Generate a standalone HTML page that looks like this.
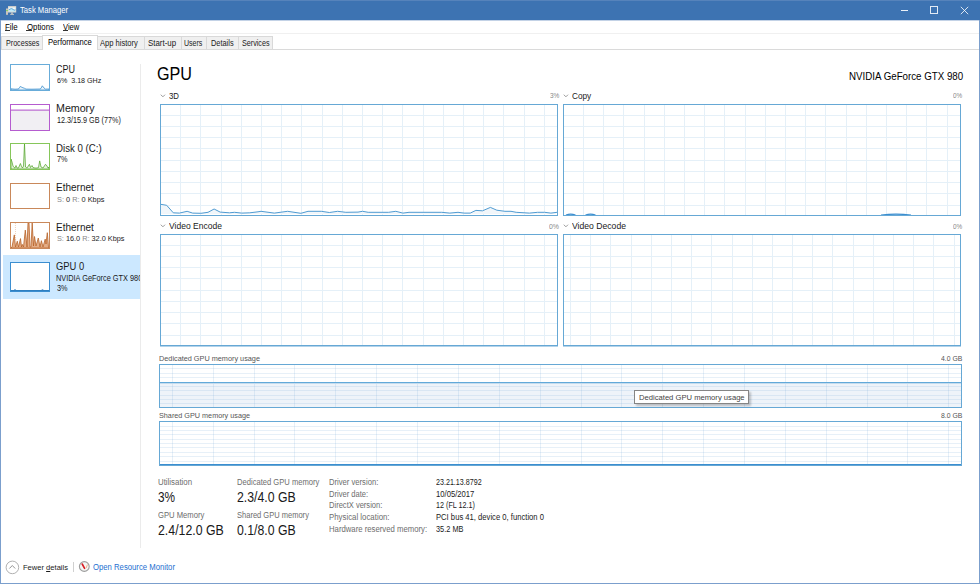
<!DOCTYPE html>
<html><head><meta charset="utf-8">
<style>
*{margin:0;padding:0;box-sizing:border-box}
html,body{width:980px;height:584px;overflow:hidden;background:#fff}
body{position:relative;font-family:"Liberation Sans",sans-serif;color:#000}
.a{position:absolute;white-space:nowrap;line-height:1;transform-origin:0 0}
svg.a{overflow:visible}
u{text-decoration:underline;text-underline-offset:1px}
</style></head><body>
<div class="a" style="left:0px;top:0px;width:980px;height:20px;background:#3d73b2;"></div>
<div class="a" style="left:0px;top:0px;width:980px;height:1px;background:#5683bb;"></div>
<div class="a" style="left:0px;top:20px;width:980px;height:1px;background:#c3d2e6;"></div>
<div class="a" style="left:0px;top:20px;width:1px;height:564px;background:#7b9fcd;"></div>
<div class="a" style="left:979px;top:20px;width:1px;height:564px;background:#7b9fcd;"></div>
<div class="a" style="left:0px;top:583px;width:980px;height:1px;background:#7b9fcd;"></div>
<svg class="a" style="left:5px;top:5px" width="13" height="12" viewBox="0 0 13 12">
<rect x="1" y="3.5" width="2" height="6.3" fill="#cbc5bb"/>
<rect x="1" y="5" width="2" height="1.1" fill="#8c6"/>
<rect x="3" y="1.1" width="8.2" height="6.4" fill="#dcd8d0"/>
<rect x="3.8" y="2.6" width="6.5" height="4" fill="#bfe8fa"/>
<path d="M3.8 2.6 H10.3 V4.6 Q9.2 5.6 8.2 4.3 Q6.8 2.8 5.2 3.9 L3.8 4.6 Z" fill="#f4f6f8"/>
<path d="M3.8 4.8 L5.2 4 Q6.8 3 8.2 4.5 Q9.2 5.6 10.3 4.8" stroke="#4b9fd6" stroke-width="0.9" fill="none"/>
<rect x="6.2" y="7.5" width="1.6" height="1.4" fill="#d6d0c6"/>
<rect x="5.2" y="8.9" width="3.8" height="0.9" fill="#d6d0c6"/>
</svg>
<div class="a" style="left:20.00px;top:6px;font-size:9.200px;color:#fff;transform:scaleX(0.8307);">Task Manager</div>
<div class="a" style="left:901px;top:10px;width:7px;height:1px;background:rgba(255,255,255,0.9);"></div>
<div class="a" style="left:930px;top:6px;width:8px;height:8px;border:1px solid rgba(255,255,255,0.85)"></div>
<svg class="a" style="left:960px;top:6px" width="9" height="9" viewBox="0 0 9 9"><path d="M0.8 0.8 L8.2 8.2 M8.2 0.8 L0.8 8.2" stroke="rgba(255,255,255,0.9)" stroke-width="0.9"/></svg>
<div class="a" style="left:5.10px;top:23px;font-size:8.700px;color:#000;transform:scaleX(0.9131);">File</div>
<div class="a" style="left:5px;top:30px;width:5px;height:1px;background:#333;"></div>
<div class="a" style="left:26.50px;top:23px;font-size:8.700px;color:#000;transform:scaleX(0.9005);">Options</div>
<div class="a" style="left:26px;top:30px;width:6px;height:1px;background:#333;"></div>
<div class="a" style="left:63.30px;top:23px;font-size:8.700px;color:#000;transform:scaleX(0.8717);">View</div>
<div class="a" style="left:63px;top:30px;width:5px;height:1px;background:#333;"></div>
<div class="a" style="left:1px;top:33px;width:978px;height:1px;background:#f0f0f0;"></div>
<div class="a" style="left:1px;top:49px;width:978px;height:1px;background:#dadada;"></div>
<div class="a" style="left:1px;top:36px;width:43px;height:13px;background:#f0f0f0;border:1px solid #d9d9d9;border-bottom:none"></div>
<div class="a" style="left:5.90px;top:39px;font-size:8.700px;color:#1a1a1a;transform:scaleX(0.8223);">Processes</div>
<div class="a" style="left:97px;top:36px;width:47.5px;height:13px;background:#f0f0f0;border:1px solid #d9d9d9;border-bottom:none"></div>
<div class="a" style="left:99.80px;top:39px;font-size:8.700px;color:#1a1a1a;transform:scaleX(0.8700);">App history</div>
<div class="a" style="left:143.5px;top:36px;width:38.19999999999999px;height:13px;background:#f0f0f0;border:1px solid #d9d9d9;border-bottom:none"></div>
<div class="a" style="left:147.90px;top:39px;font-size:8.700px;color:#1a1a1a;transform:scaleX(0.9080);">Start-up</div>
<div class="a" style="left:180.7px;top:36px;width:26.700000000000017px;height:13px;background:#f0f0f0;border:1px solid #d9d9d9;border-bottom:none"></div>
<div class="a" style="left:184.30px;top:39px;font-size:8.700px;color:#1a1a1a;transform:scaleX(0.8099);">Users</div>
<div class="a" style="left:206.4px;top:36px;width:32.19999999999999px;height:13px;background:#f0f0f0;border:1px solid #d9d9d9;border-bottom:none"></div>
<div class="a" style="left:211.00px;top:39px;font-size:8.700px;color:#1a1a1a;transform:scaleX(0.8499);">Details</div>
<div class="a" style="left:237.6px;top:36px;width:35.00000000000003px;height:13px;background:#f0f0f0;border:1px solid #d9d9d9;border-bottom:none"></div>
<div class="a" style="left:241.70px;top:39px;font-size:8.700px;color:#1a1a1a;transform:scaleX(0.8273);">Services</div>
<div class="a" style="left:42px;top:35px;width:56px;height:15px;background:#fff;border:1px solid #d9d9d9;border-bottom:none"></div>
<div class="a" style="left:48.00px;top:38px;font-size:8.700px;color:#000;transform:scaleX(0.8794);">Performance</div>
<div class="a" style="left:140px;top:64px;width:1px;height:484px;background:#ebebeb;"></div>
<div class="a" style="left:3px;top:255px;width:137px;height:44px;background:#cce8ff;"></div>
<svg class="a" style="left:10px;top:64px" width="40" height="27" viewBox="0 0 40 27"><path d="M1 26 L1 24.8 L5 25.2 L8 25 L9 24.6 L10.3 22.4 L12 23.4 L14.5 24.3 L16 25.1 L22 25.2 L30 25 L31 24.4 L32.3 21.8 L34 24 L35.5 25.1 L39 25 L39 26 Z" fill="#eaf3fa" stroke="#3f92cf" stroke-width="0.8"/><rect x="0.5" y="0.5" width="39" height="26" fill="none" stroke="#68acd9" stroke-width="1"/></svg>
<div class="a" style="left:56.10px;top:64px;font-size:10.800px;color:#1a1a1a;transform:scaleX(0.8332);">CPU</div>
<div class="a" style="left:56.50px;top:77px;font-size:8.100px;color:#1a1a1a;transform:scaleX(0.8786);">6%&nbsp; 3.18 GHz</div>
<svg class="a" style="left:10px;top:104px" width="40" height="27" viewBox="0 0 40 27"><rect x="1" y="6" width="38" height="20" fill="#f1eff3"/><rect x="1" y="5.6" width="38" height="1" fill="#b04ecb"/><rect x="0.5" y="0.5" width="39" height="26" fill="none" stroke="#b55ccf" stroke-width="1"/></svg>
<div class="a" style="left:56.10px;top:103px;font-size:10.800px;color:#1a1a1a;transform:scaleX(0.9871);">Memory</div>
<div class="a" style="left:56.50px;top:116px;font-size:8.400px;color:#1a1a1a;transform:scaleX(0.8620);">12.3/15.9 GB (77%)</div>
<svg class="a" style="left:10px;top:143px" width="40" height="27" viewBox="0 0 40 27"><path d="M1 26 L1 16 L2 19 L3 23 L4 24.5 L5 25 L6 22.5 L7 25 L8.5 25 L10.4 20.5 L11.5 23.5 L12.5 25 L13.5 23 L14.5 0.8 L15.5 24 L17 25 L19.4 21.3 L20.5 24.5 L22 22.5 L23 24.5 L25 25 L27 25 L28.5 24.5 L29.7 17.9 L31 24 L33 25 L35.5 21.3 L37 23 L38 25 L39 24 L39 26 Z" fill="#e6f2de" stroke="#4aa020" stroke-width="0.7"/><rect x="0.5" y="0.5" width="39" height="26" fill="none" stroke="#86c65a" stroke-width="1"/></svg>
<div class="a" style="left:56.10px;top:143px;font-size:10.800px;color:#1a1a1a;transform:scaleX(0.8961);">Disk 0 (C:)</div>
<div class="a" style="left:56.50px;top:155px;font-size:8.400px;color:#1a1a1a;transform:scaleX(0.8731);">7%</div>
<svg class="a" style="left:10px;top:183px" width="40" height="26" viewBox="0 0 40 26"><rect x="0.5" y="0.5" width="39" height="25" fill="none" stroke="#c9885a" stroke-width="1"/></svg>
<div class="a" style="left:56.10px;top:182px;font-size:10.800px;color:#1a1a1a;transform:scaleX(0.9259);">Ethernet</div>

<div class="a" style="left:56.50px;top:196px;font-size:8.100px;color:#1a1a1a;transform:scaleX(0.9095);"><span style="color:#888">S:</span> 0 <span style="color:#888">R:</span> 0 Kbps</div>
<svg class="a" style="left:10px;top:222px" width="40" height="27" viewBox="0 0 40 27"><path d="M5.4 1 L5.6 18" stroke="#efd2bd" stroke-width="1" stroke-dasharray="1 1" fill="none"/><path d="M1 26 L2 25 L4.3 12.9 L5.5 25 L7.3 19.2 L8.5 25 L10.5 16.6 L11.5 25 L12.3 22.4 L13.5 25 L15.3 8.1 L17 25 L18 1 L19 1 L20 25 L21 25 L22.2 1 L23.5 24 L24.5 14.5 L26 24 L28.3 16 L30 25 L31.4 18.7 L33 25 L35.2 17.1 L36 22 L37.3 10.7 L38.5 25 L39 26 Z" fill="#e4ad86" stroke="#b8632a" stroke-width="0.8"/><rect x="0.5" y="0.5" width="39" height="26" fill="none" stroke="#c9885a" stroke-width="1"/></svg>
<div class="a" style="left:56.10px;top:222px;font-size:10.800px;color:#1a1a1a;transform:scaleX(0.9259);">Ethernet</div>
<div class="a" style="left:56.50px;top:235px;font-size:8.100px;color:#1a1a1a;transform:scaleX(0.9030);"><span style="color:#888">S:</span> 16.0 <span style="color:#888">R:</span> 32.0 Kbps</div>
<svg class="a" style="left:10px;top:262px" width="40" height="30" viewBox="0 0 40 30"><rect x="0" y="0" width="40" height="30" fill="#fff"/><rect x="1" y="28" width="38" height="1.2" fill="#2f7fc0"/><path d="M4 28.5 L5 27 L6 28.5 M31.5 28.5 L32.5 27 L33.5 28.5" stroke="#2f7fc0" stroke-width="0.6" fill="none"/><rect x="0.5" y="0.5" width="39" height="29" fill="none" stroke="#3b8ed0" stroke-width="1"/></svg>
<div class="a" style="left:56.30px;top:261px;font-size:10.800px;color:#1a1a1a;transform:scaleX(0.8701);">GPU 0</div>
<div class="a" style="left:0;top:270px;width:140px;height:14px;overflow:hidden">
<div class="a" style="left:56.30px;top:4px;font-size:8.700px;color:#1a1a1a;transform:scaleX(0.8469);">NVIDIA GeForce GTX 980</div>
</div>
<div class="a" style="left:56.50px;top:284px;font-size:9.000px;color:#1a1a1a;transform:scaleX(0.8072);">3%</div>
<div class="a" style="left:156.70px;top:65px;font-size:18.600px;color:#000;transform:scaleX(0.8684);">GPU</div>
<div class="a" style="left:848.90px;top:71px;font-size:10.500px;color:#000;transform:scaleX(0.9275);">NVIDIA GeForce GTX 980</div>
<svg class="a" style="left:160px;top:93.5px" width="6" height="4" viewBox="0 0 6 4"><path d="M0.8 0.7 L2.9 2.8 L5 0.7" stroke="#9a9a9a" stroke-width="1" fill="none"/></svg>
<div class="a" style="left:168.80px;top:92px;font-size:9.000px;color:#1a1a1a;transform:scaleX(0.8692);">3D</div>
<div class="a" style="left:549.60px;top:92px;font-size:7.300px;color:#888;transform:scaleX(0.8909);">3%</div>
<svg class="a" style="left:160px;top:104px" width="398" height="112" viewBox="0 0 398 112" shape-rendering="crispEdges"><line x1="20.5" y1="0" x2="20.5" y2="112" stroke="#e5f0f8" stroke-width="1"/><line x1="40.5" y1="0" x2="40.5" y2="112" stroke="#e5f0f8" stroke-width="1"/><line x1="61.5" y1="0" x2="61.5" y2="112" stroke="#e5f0f8" stroke-width="1"/><line x1="81.5" y1="0" x2="81.5" y2="112" stroke="#e5f0f8" stroke-width="1"/><line x1="101.5" y1="0" x2="101.5" y2="112" stroke="#e5f0f8" stroke-width="1"/><line x1="121.5" y1="0" x2="121.5" y2="112" stroke="#e5f0f8" stroke-width="1"/><line x1="141.5" y1="0" x2="141.5" y2="112" stroke="#e5f0f8" stroke-width="1"/><line x1="162.5" y1="0" x2="162.5" y2="112" stroke="#e5f0f8" stroke-width="1"/><line x1="182.5" y1="0" x2="182.5" y2="112" stroke="#e5f0f8" stroke-width="1"/><line x1="202.5" y1="0" x2="202.5" y2="112" stroke="#e5f0f8" stroke-width="1"/><line x1="222.5" y1="0" x2="222.5" y2="112" stroke="#e5f0f8" stroke-width="1"/><line x1="242.5" y1="0" x2="242.5" y2="112" stroke="#e5f0f8" stroke-width="1"/><line x1="263.5" y1="0" x2="263.5" y2="112" stroke="#e5f0f8" stroke-width="1"/><line x1="283.5" y1="0" x2="283.5" y2="112" stroke="#e5f0f8" stroke-width="1"/><line x1="303.5" y1="0" x2="303.5" y2="112" stroke="#e5f0f8" stroke-width="1"/><line x1="323.5" y1="0" x2="323.5" y2="112" stroke="#e5f0f8" stroke-width="1"/><line x1="343.5" y1="0" x2="343.5" y2="112" stroke="#e5f0f8" stroke-width="1"/><line x1="364.5" y1="0" x2="364.5" y2="112" stroke="#e5f0f8" stroke-width="1"/><line x1="384.5" y1="0" x2="384.5" y2="112" stroke="#e5f0f8" stroke-width="1"/><line x1="0" y1="11.5" x2="398" y2="11.5" stroke="#e5f0f8" stroke-width="1"/><line x1="0" y1="22.5" x2="398" y2="22.5" stroke="#e5f0f8" stroke-width="1"/><line x1="0" y1="33.5" x2="398" y2="33.5" stroke="#e5f0f8" stroke-width="1"/><line x1="0" y1="44.5" x2="398" y2="44.5" stroke="#e5f0f8" stroke-width="1"/><line x1="0" y1="56.5" x2="398" y2="56.5" stroke="#e5f0f8" stroke-width="1"/><line x1="0" y1="67.5" x2="398" y2="67.5" stroke="#e5f0f8" stroke-width="1"/><line x1="0" y1="78.5" x2="398" y2="78.5" stroke="#e5f0f8" stroke-width="1"/><line x1="0" y1="89.5" x2="398" y2="89.5" stroke="#e5f0f8" stroke-width="1"/><line x1="0" y1="101.5" x2="398" y2="101.5" stroke="#e5f0f8" stroke-width="1"/><path d="M0.6 100.3 L6.7 101.3 L13.3 108.8 L19.4 109.1 L27.1 107.3 L32.7 109.1 L40.9 109.3 L48.0 108.3 L54.1 105.0 L60.2 108.1 L69.4 108.8 L74.5 108.3 L81.7 109.1 L89.8 108.8 L98.0 107.8 L101.0 107.3 L114.3 109.1 L127.6 107.3 L140.9 109.3 L148.0 107.3 L161.3 107.3 L169.4 108.5 L177.6 107.3 L185.8 108.3 L198.0 108.1 L202.6 107.3 L208.2 108.3 L228.6 108.3 L235.8 107.3 L242.9 109.1 L249.0 108.3 L281.7 108.3 L289.8 109.1 L298.0 108.3 L304.1 109.1 L310.2 109.1 L315.9 106.4 L322.5 106.8 L330.4 103.4 L336.8 106.2 L344.9 107.3 L351.0 107.3 L356.2 108.3 L369.4 109.1 L377.6 108.3 L384.7 108.3 L390.9 109.1 L397.0 108.3 L396 110 L1 110 Z" fill="#f1f6fa" stroke="none"/><path d="M0.6 100.3 L6.7 101.3 L13.3 108.8 L19.4 109.1 L27.1 107.3 L32.7 109.1 L40.9 109.3 L48.0 108.3 L54.1 105.0 L60.2 108.1 L69.4 108.8 L74.5 108.3 L81.7 109.1 L89.8 108.8 L98.0 107.8 L101.0 107.3 L114.3 109.1 L127.6 107.3 L140.9 109.3 L148.0 107.3 L161.3 107.3 L169.4 108.5 L177.6 107.3 L185.8 108.3 L198.0 108.1 L202.6 107.3 L208.2 108.3 L228.6 108.3 L235.8 107.3 L242.9 109.1 L249.0 108.3 L281.7 108.3 L289.8 109.1 L298.0 108.3 L304.1 109.1 L310.2 109.1 L315.9 106.4 L322.5 106.8 L330.4 103.4 L336.8 106.2 L344.9 107.3 L351.0 107.3 L356.2 108.3 L369.4 109.1 L377.6 108.3 L384.7 108.3 L390.9 109.1 L397.0 108.3" stroke="#4f9bd2" stroke-width="1" fill="none" shape-rendering="auto"/><rect x="0.5" y="0.5" width="397" height="111" fill="none" stroke="#66a8d5" stroke-width="1"/></svg>
<svg class="a" style="left:563px;top:93.5px" width="6" height="4" viewBox="0 0 6 4"><path d="M0.8 0.7 L2.9 2.8 L5 0.7" stroke="#9a9a9a" stroke-width="1" fill="none"/></svg>
<div class="a" style="left:572.00px;top:92px;font-size:9.000px;color:#1a1a1a;transform:scaleX(0.9138);">Copy</div>
<div class="a" style="left:952.90px;top:92px;font-size:7.300px;color:#888;transform:scaleX(0.8720);">0%</div>
<svg class="a" style="left:563px;top:104px" width="398" height="112" viewBox="0 0 398 112" shape-rendering="crispEdges"><line x1="20.5" y1="0" x2="20.5" y2="112" stroke="#e5f0f8" stroke-width="1"/><line x1="40.5" y1="0" x2="40.5" y2="112" stroke="#e5f0f8" stroke-width="1"/><line x1="60.5" y1="0" x2="60.5" y2="112" stroke="#e5f0f8" stroke-width="1"/><line x1="81.5" y1="0" x2="81.5" y2="112" stroke="#e5f0f8" stroke-width="1"/><line x1="101.5" y1="0" x2="101.5" y2="112" stroke="#e5f0f8" stroke-width="1"/><line x1="121.5" y1="0" x2="121.5" y2="112" stroke="#e5f0f8" stroke-width="1"/><line x1="141.5" y1="0" x2="141.5" y2="112" stroke="#e5f0f8" stroke-width="1"/><line x1="161.5" y1="0" x2="161.5" y2="112" stroke="#e5f0f8" stroke-width="1"/><line x1="182.5" y1="0" x2="182.5" y2="112" stroke="#e5f0f8" stroke-width="1"/><line x1="202.5" y1="0" x2="202.5" y2="112" stroke="#e5f0f8" stroke-width="1"/><line x1="222.5" y1="0" x2="222.5" y2="112" stroke="#e5f0f8" stroke-width="1"/><line x1="242.5" y1="0" x2="242.5" y2="112" stroke="#e5f0f8" stroke-width="1"/><line x1="262.5" y1="0" x2="262.5" y2="112" stroke="#e5f0f8" stroke-width="1"/><line x1="283.5" y1="0" x2="283.5" y2="112" stroke="#e5f0f8" stroke-width="1"/><line x1="303.5" y1="0" x2="303.5" y2="112" stroke="#e5f0f8" stroke-width="1"/><line x1="323.5" y1="0" x2="323.5" y2="112" stroke="#e5f0f8" stroke-width="1"/><line x1="343.5" y1="0" x2="343.5" y2="112" stroke="#e5f0f8" stroke-width="1"/><line x1="363.5" y1="0" x2="363.5" y2="112" stroke="#e5f0f8" stroke-width="1"/><line x1="384.5" y1="0" x2="384.5" y2="112" stroke="#e5f0f8" stroke-width="1"/><line x1="0" y1="11.5" x2="398" y2="11.5" stroke="#e5f0f8" stroke-width="1"/><line x1="0" y1="22.5" x2="398" y2="22.5" stroke="#e5f0f8" stroke-width="1"/><line x1="0" y1="33.5" x2="398" y2="33.5" stroke="#e5f0f8" stroke-width="1"/><line x1="0" y1="44.5" x2="398" y2="44.5" stroke="#e5f0f8" stroke-width="1"/><line x1="0" y1="56.5" x2="398" y2="56.5" stroke="#e5f0f8" stroke-width="1"/><line x1="0" y1="67.5" x2="398" y2="67.5" stroke="#e5f0f8" stroke-width="1"/><line x1="0" y1="78.5" x2="398" y2="78.5" stroke="#e5f0f8" stroke-width="1"/><line x1="0" y1="89.5" x2="398" y2="89.5" stroke="#e5f0f8" stroke-width="1"/><line x1="0" y1="101.5" x2="398" y2="101.5" stroke="#e5f0f8" stroke-width="1"/><path d="M3 111 Q7.5 109.2 12.5 111 M22.5 111 Q27.5 109.2 32.5 111 M318 111 Q333 109.2 348 111" stroke="#3b8ed0" stroke-width="1.1" fill="#cfe3f2" shape-rendering="auto"/><rect x="0.5" y="0.5" width="397" height="111" fill="none" stroke="#66a8d5" stroke-width="1"/></svg>
<svg class="a" style="left:160px;top:223.5px" width="6" height="4" viewBox="0 0 6 4"><path d="M0.8 0.7 L2.9 2.8 L5 0.7" stroke="#9a9a9a" stroke-width="1" fill="none"/></svg>
<div class="a" style="left:168.80px;top:222px;font-size:9.000px;color:#1a1a1a;transform:scaleX(0.9484);">Video Encode</div>
<div class="a" style="left:549.20px;top:223px;font-size:7.300px;color:#888;transform:scaleX(0.9478);">0%</div>
<svg class="a" style="left:160px;top:234px" width="398" height="112" viewBox="0 0 398 112" shape-rendering="crispEdges"><line x1="20.5" y1="0" x2="20.5" y2="112" stroke="#e5f0f8" stroke-width="1"/><line x1="40.5" y1="0" x2="40.5" y2="112" stroke="#e5f0f8" stroke-width="1"/><line x1="61.5" y1="0" x2="61.5" y2="112" stroke="#e5f0f8" stroke-width="1"/><line x1="81.5" y1="0" x2="81.5" y2="112" stroke="#e5f0f8" stroke-width="1"/><line x1="101.5" y1="0" x2="101.5" y2="112" stroke="#e5f0f8" stroke-width="1"/><line x1="121.5" y1="0" x2="121.5" y2="112" stroke="#e5f0f8" stroke-width="1"/><line x1="141.5" y1="0" x2="141.5" y2="112" stroke="#e5f0f8" stroke-width="1"/><line x1="162.5" y1="0" x2="162.5" y2="112" stroke="#e5f0f8" stroke-width="1"/><line x1="182.5" y1="0" x2="182.5" y2="112" stroke="#e5f0f8" stroke-width="1"/><line x1="202.5" y1="0" x2="202.5" y2="112" stroke="#e5f0f8" stroke-width="1"/><line x1="222.5" y1="0" x2="222.5" y2="112" stroke="#e5f0f8" stroke-width="1"/><line x1="242.5" y1="0" x2="242.5" y2="112" stroke="#e5f0f8" stroke-width="1"/><line x1="263.5" y1="0" x2="263.5" y2="112" stroke="#e5f0f8" stroke-width="1"/><line x1="283.5" y1="0" x2="283.5" y2="112" stroke="#e5f0f8" stroke-width="1"/><line x1="303.5" y1="0" x2="303.5" y2="112" stroke="#e5f0f8" stroke-width="1"/><line x1="323.5" y1="0" x2="323.5" y2="112" stroke="#e5f0f8" stroke-width="1"/><line x1="343.5" y1="0" x2="343.5" y2="112" stroke="#e5f0f8" stroke-width="1"/><line x1="364.5" y1="0" x2="364.5" y2="112" stroke="#e5f0f8" stroke-width="1"/><line x1="384.5" y1="0" x2="384.5" y2="112" stroke="#e5f0f8" stroke-width="1"/><line x1="0" y1="11.5" x2="398" y2="11.5" stroke="#e5f0f8" stroke-width="1"/><line x1="0" y1="22.5" x2="398" y2="22.5" stroke="#e5f0f8" stroke-width="1"/><line x1="0" y1="33.5" x2="398" y2="33.5" stroke="#e5f0f8" stroke-width="1"/><line x1="0" y1="44.5" x2="398" y2="44.5" stroke="#e5f0f8" stroke-width="1"/><line x1="0" y1="56.5" x2="398" y2="56.5" stroke="#e5f0f8" stroke-width="1"/><line x1="0" y1="67.5" x2="398" y2="67.5" stroke="#e5f0f8" stroke-width="1"/><line x1="0" y1="78.5" x2="398" y2="78.5" stroke="#e5f0f8" stroke-width="1"/><line x1="0" y1="89.5" x2="398" y2="89.5" stroke="#e5f0f8" stroke-width="1"/><line x1="0" y1="101.5" x2="398" y2="101.5" stroke="#e5f0f8" stroke-width="1"/><rect x="0.5" y="0.5" width="397" height="111" fill="none" stroke="#66a8d5" stroke-width="1"/></svg>
<div class="a" style="left:160px;top:346px;width:398px;height:1px;background:#b3d3ea;"></div>
<svg class="a" style="left:563px;top:223.5px" width="6" height="4" viewBox="0 0 6 4"><path d="M0.8 0.7 L2.9 2.8 L5 0.7" stroke="#9a9a9a" stroke-width="1" fill="none"/></svg>
<div class="a" style="left:571.50px;top:222px;font-size:9.000px;color:#1a1a1a;transform:scaleX(0.9578);">Video Decode</div>
<div class="a" style="left:952.90px;top:223px;font-size:7.300px;color:#888;transform:scaleX(0.8720);">0%</div>
<svg class="a" style="left:563px;top:234px" width="398" height="112" viewBox="0 0 398 112" shape-rendering="crispEdges"><line x1="7.5" y1="0" x2="7.5" y2="112" stroke="#e5f0f8" stroke-width="1"/><line x1="27.5" y1="0" x2="27.5" y2="112" stroke="#e5f0f8" stroke-width="1"/><line x1="47.5" y1="0" x2="47.5" y2="112" stroke="#e5f0f8" stroke-width="1"/><line x1="68.5" y1="0" x2="68.5" y2="112" stroke="#e5f0f8" stroke-width="1"/><line x1="88.5" y1="0" x2="88.5" y2="112" stroke="#e5f0f8" stroke-width="1"/><line x1="108.5" y1="0" x2="108.5" y2="112" stroke="#e5f0f8" stroke-width="1"/><line x1="128.5" y1="0" x2="128.5" y2="112" stroke="#e5f0f8" stroke-width="1"/><line x1="148.5" y1="0" x2="148.5" y2="112" stroke="#e5f0f8" stroke-width="1"/><line x1="169.5" y1="0" x2="169.5" y2="112" stroke="#e5f0f8" stroke-width="1"/><line x1="189.5" y1="0" x2="189.5" y2="112" stroke="#e5f0f8" stroke-width="1"/><line x1="209.5" y1="0" x2="209.5" y2="112" stroke="#e5f0f8" stroke-width="1"/><line x1="229.5" y1="0" x2="229.5" y2="112" stroke="#e5f0f8" stroke-width="1"/><line x1="249.5" y1="0" x2="249.5" y2="112" stroke="#e5f0f8" stroke-width="1"/><line x1="269.5" y1="0" x2="269.5" y2="112" stroke="#e5f0f8" stroke-width="1"/><line x1="290.5" y1="0" x2="290.5" y2="112" stroke="#e5f0f8" stroke-width="1"/><line x1="310.5" y1="0" x2="310.5" y2="112" stroke="#e5f0f8" stroke-width="1"/><line x1="330.5" y1="0" x2="330.5" y2="112" stroke="#e5f0f8" stroke-width="1"/><line x1="350.5" y1="0" x2="350.5" y2="112" stroke="#e5f0f8" stroke-width="1"/><line x1="370.5" y1="0" x2="370.5" y2="112" stroke="#e5f0f8" stroke-width="1"/><line x1="391.5" y1="0" x2="391.5" y2="112" stroke="#e5f0f8" stroke-width="1"/><line x1="0" y1="11.5" x2="398" y2="11.5" stroke="#e5f0f8" stroke-width="1"/><line x1="0" y1="22.5" x2="398" y2="22.5" stroke="#e5f0f8" stroke-width="1"/><line x1="0" y1="33.5" x2="398" y2="33.5" stroke="#e5f0f8" stroke-width="1"/><line x1="0" y1="44.5" x2="398" y2="44.5" stroke="#e5f0f8" stroke-width="1"/><line x1="0" y1="56.5" x2="398" y2="56.5" stroke="#e5f0f8" stroke-width="1"/><line x1="0" y1="67.5" x2="398" y2="67.5" stroke="#e5f0f8" stroke-width="1"/><line x1="0" y1="78.5" x2="398" y2="78.5" stroke="#e5f0f8" stroke-width="1"/><line x1="0" y1="89.5" x2="398" y2="89.5" stroke="#e5f0f8" stroke-width="1"/><line x1="0" y1="101.5" x2="398" y2="101.5" stroke="#e5f0f8" stroke-width="1"/><rect x="0.5" y="0.5" width="397" height="111" fill="none" stroke="#66a8d5" stroke-width="1"/></svg>
<div class="a" style="left:563px;top:346px;width:398px;height:1px;background:#b3d3ea;"></div>
<div class="a" style="left:158.90px;top:355px;font-size:7.800px;color:#555;transform:scaleX(0.9356);">Dedicated GPU memory usage</div>
<div class="a" style="left:940.50px;top:355px;font-size:7.300px;color:#555;transform:scaleX(0.9374);">4.0 GB</div>
<svg class="a" style="left:159px;top:364px" width="803" height="44" viewBox="0 0 803 44" shape-rendering="crispEdges"><rect x="1" y="18" width="801" height="25" fill="#eef3f9"/><line x1="13.5" y1="0" x2="13.5" y2="44" stroke="rgba(110,165,212,0.17)" stroke-width="1"/><line x1="54.5" y1="0" x2="54.5" y2="44" stroke="rgba(110,165,212,0.17)" stroke-width="1"/><line x1="95.5" y1="0" x2="95.5" y2="44" stroke="rgba(110,165,212,0.17)" stroke-width="1"/><line x1="135.5" y1="0" x2="135.5" y2="44" stroke="rgba(110,165,212,0.17)" stroke-width="1"/><line x1="176.5" y1="0" x2="176.5" y2="44" stroke="rgba(110,165,212,0.17)" stroke-width="1"/><line x1="217.5" y1="0" x2="217.5" y2="44" stroke="rgba(110,165,212,0.17)" stroke-width="1"/><line x1="258.5" y1="0" x2="258.5" y2="44" stroke="rgba(110,165,212,0.17)" stroke-width="1"/><line x1="299.5" y1="0" x2="299.5" y2="44" stroke="rgba(110,165,212,0.17)" stroke-width="1"/><line x1="340.5" y1="0" x2="340.5" y2="44" stroke="rgba(110,165,212,0.17)" stroke-width="1"/><line x1="381.5" y1="0" x2="381.5" y2="44" stroke="rgba(110,165,212,0.17)" stroke-width="1"/><line x1="422.5" y1="0" x2="422.5" y2="44" stroke="rgba(110,165,212,0.17)" stroke-width="1"/><line x1="462.5" y1="0" x2="462.5" y2="44" stroke="rgba(110,165,212,0.17)" stroke-width="1"/><line x1="503.5" y1="0" x2="503.5" y2="44" stroke="rgba(110,165,212,0.17)" stroke-width="1"/><line x1="544.5" y1="0" x2="544.5" y2="44" stroke="rgba(110,165,212,0.17)" stroke-width="1"/><line x1="585.5" y1="0" x2="585.5" y2="44" stroke="rgba(110,165,212,0.17)" stroke-width="1"/><line x1="626.5" y1="0" x2="626.5" y2="44" stroke="rgba(110,165,212,0.17)" stroke-width="1"/><line x1="667.5" y1="0" x2="667.5" y2="44" stroke="rgba(110,165,212,0.17)" stroke-width="1"/><line x1="708.5" y1="0" x2="708.5" y2="44" stroke="rgba(110,165,212,0.17)" stroke-width="1"/><line x1="748.5" y1="0" x2="748.5" y2="44" stroke="rgba(110,165,212,0.17)" stroke-width="1"/><line x1="789.5" y1="0" x2="789.5" y2="44" stroke="rgba(110,165,212,0.17)" stroke-width="1"/><line x1="0" y1="4.5" x2="803" y2="4.5" stroke="rgba(110,165,212,0.17)" stroke-width="1"/><line x1="0" y1="9.5" x2="803" y2="9.5" stroke="rgba(110,165,212,0.17)" stroke-width="1"/><line x1="0" y1="13.5" x2="803" y2="13.5" stroke="rgba(110,165,212,0.17)" stroke-width="1"/><line x1="0" y1="22.5" x2="803" y2="22.5" stroke="rgba(110,165,212,0.17)" stroke-width="1"/><line x1="0" y1="26.5" x2="803" y2="26.5" stroke="rgba(110,165,212,0.17)" stroke-width="1"/><line x1="0" y1="31.5" x2="803" y2="31.5" stroke="rgba(110,165,212,0.17)" stroke-width="1"/><line x1="0" y1="35.5" x2="803" y2="35.5" stroke="rgba(110,165,212,0.17)" stroke-width="1"/><line x1="0" y1="39.5" x2="803" y2="39.5" stroke="rgba(110,165,212,0.17)" stroke-width="1"/><rect x="0.5" y="0.5" width="802" height="43" fill="none" stroke="#66a8d5" stroke-width="1"/></svg>
<div class="a" style="left:160px;top:382px;width:801px;height:1px;background:#62a9d9"></div>
<div class="a" style="left:160px;top:383px;width:801px;height:1px;background:#c5dcee"></div>
<div class="a" style="left:158.90px;top:412px;font-size:7.800px;color:#555;transform:scaleX(0.9288);">Shared GPU memory usage</div>
<div class="a" style="left:940.50px;top:412px;font-size:7.300px;color:#555;transform:scaleX(0.9374);">8.0 GB</div>
<svg class="a" style="left:159px;top:421px" width="803" height="45" viewBox="0 0 803 45" shape-rendering="crispEdges"><line x1="13.5" y1="0" x2="13.5" y2="45" stroke="rgba(110,165,212,0.17)" stroke-width="1"/><line x1="54.5" y1="0" x2="54.5" y2="45" stroke="rgba(110,165,212,0.17)" stroke-width="1"/><line x1="95.5" y1="0" x2="95.5" y2="45" stroke="rgba(110,165,212,0.17)" stroke-width="1"/><line x1="135.5" y1="0" x2="135.5" y2="45" stroke="rgba(110,165,212,0.17)" stroke-width="1"/><line x1="176.5" y1="0" x2="176.5" y2="45" stroke="rgba(110,165,212,0.17)" stroke-width="1"/><line x1="217.5" y1="0" x2="217.5" y2="45" stroke="rgba(110,165,212,0.17)" stroke-width="1"/><line x1="258.5" y1="0" x2="258.5" y2="45" stroke="rgba(110,165,212,0.17)" stroke-width="1"/><line x1="299.5" y1="0" x2="299.5" y2="45" stroke="rgba(110,165,212,0.17)" stroke-width="1"/><line x1="340.5" y1="0" x2="340.5" y2="45" stroke="rgba(110,165,212,0.17)" stroke-width="1"/><line x1="381.5" y1="0" x2="381.5" y2="45" stroke="rgba(110,165,212,0.17)" stroke-width="1"/><line x1="422.5" y1="0" x2="422.5" y2="45" stroke="rgba(110,165,212,0.17)" stroke-width="1"/><line x1="462.5" y1="0" x2="462.5" y2="45" stroke="rgba(110,165,212,0.17)" stroke-width="1"/><line x1="503.5" y1="0" x2="503.5" y2="45" stroke="rgba(110,165,212,0.17)" stroke-width="1"/><line x1="544.5" y1="0" x2="544.5" y2="45" stroke="rgba(110,165,212,0.17)" stroke-width="1"/><line x1="585.5" y1="0" x2="585.5" y2="45" stroke="rgba(110,165,212,0.17)" stroke-width="1"/><line x1="626.5" y1="0" x2="626.5" y2="45" stroke="rgba(110,165,212,0.17)" stroke-width="1"/><line x1="667.5" y1="0" x2="667.5" y2="45" stroke="rgba(110,165,212,0.17)" stroke-width="1"/><line x1="708.5" y1="0" x2="708.5" y2="45" stroke="rgba(110,165,212,0.17)" stroke-width="1"/><line x1="748.5" y1="0" x2="748.5" y2="45" stroke="rgba(110,165,212,0.17)" stroke-width="1"/><line x1="789.5" y1="0" x2="789.5" y2="45" stroke="rgba(110,165,212,0.17)" stroke-width="1"/><line x1="0" y1="5.5" x2="803" y2="5.5" stroke="rgba(110,165,212,0.17)" stroke-width="1"/><line x1="0" y1="9.5" x2="803" y2="9.5" stroke="rgba(110,165,212,0.17)" stroke-width="1"/><line x1="0" y1="13.5" x2="803" y2="13.5" stroke="rgba(110,165,212,0.17)" stroke-width="1"/><line x1="0" y1="18.5" x2="803" y2="18.5" stroke="rgba(110,165,212,0.17)" stroke-width="1"/><line x1="0" y1="22.5" x2="803" y2="22.5" stroke="rgba(110,165,212,0.17)" stroke-width="1"/><line x1="0" y1="26.5" x2="803" y2="26.5" stroke="rgba(110,165,212,0.17)" stroke-width="1"/><line x1="0" y1="31.5" x2="803" y2="31.5" stroke="rgba(110,165,212,0.17)" stroke-width="1"/><line x1="0" y1="35.5" x2="803" y2="35.5" stroke="rgba(110,165,212,0.17)" stroke-width="1"/><line x1="0" y1="40.5" x2="803" y2="40.5" stroke="rgba(110,165,212,0.17)" stroke-width="1"/><rect x="0.5" y="0.5" width="802" height="44" fill="none" stroke="#66a8d5" stroke-width="1"/></svg>
<div class="a" style="left:160px;top:464px;width:801px;height:1px;background:#3b8ed0;"></div>
<div class="a" style="left:634px;top:390px;width:115px;height:14px;background:#fff;border:1px solid #858585;box-shadow:2px 2px 2px rgba(0,0,0,0.22)"></div>
<div class="a" style="left:638.60px;top:394px;font-size:8.100px;color:#444;transform:scaleX(0.9429);">Dedicated GPU memory usage</div>
<div class="a" style="left:157.70px;top:478px;font-size:8.400px;color:#6d6d6d;transform:scaleX(0.9392);">Utilisation</div>
<div class="a" style="left:157.70px;top:490px;font-size:14.100px;color:#1a1a1a;transform:scaleX(0.8391);">3%</div>
<div class="a" style="left:157.70px;top:511px;font-size:8.400px;color:#6d6d6d;transform:scaleX(0.9141);">GPU Memory</div>
<div class="a" style="left:157.70px;top:523px;font-size:14.100px;color:#1a1a1a;transform:scaleX(0.8744);">2.4/12.0 GB</div>
<div class="a" style="left:237.30px;top:478px;font-size:8.400px;color:#6d6d6d;transform:scaleX(0.9074);">Dedicated GPU memory</div>
<div class="a" style="left:237.30px;top:490px;font-size:14.100px;color:#1a1a1a;transform:scaleX(0.8708);">2.3/4.0 GB</div>
<div class="a" style="left:237.30px;top:511px;font-size:8.400px;color:#6d6d6d;transform:scaleX(0.8980);">Shared GPU memory</div>
<div class="a" style="left:237.30px;top:523px;font-size:14.100px;color:#1a1a1a;transform:scaleX(0.8708);">0.1/8.0 GB</div>
<div class="a" style="left:328.60px;top:478px;font-size:8.400px;color:#6d6d6d;transform:scaleX(0.9124);">Driver version:</div>
<div class="a" style="left:435.80px;top:478px;font-size:8.400px;color:#1a1a1a;transform:scaleX(0.8526);">23.21.13.8792</div>
<div class="a" style="left:328.60px;top:490px;font-size:8.400px;color:#6d6d6d;transform:scaleX(0.9052);">Driver date:</div>
<div class="a" style="left:435.80px;top:490px;font-size:8.400px;color:#1a1a1a;transform:scaleX(0.9158);">10/05/2017</div>
<div class="a" style="left:328.60px;top:501px;font-size:8.400px;color:#6d6d6d;transform:scaleX(0.9024);">DirectX version:</div>
<div class="a" style="left:435.80px;top:501px;font-size:8.400px;color:#1a1a1a;transform:scaleX(0.8582);">12 (FL 12.1)</div>
<div class="a" style="left:328.60px;top:513px;font-size:8.400px;color:#6d6d6d;transform:scaleX(0.9353);">Physical location:</div>
<div class="a" style="left:435.80px;top:513px;font-size:8.400px;color:#1a1a1a;transform:scaleX(0.9131);">PCI bus 41, device 0, function 0</div>
<div class="a" style="left:328.60px;top:525px;font-size:8.400px;color:#6d6d6d;transform:scaleX(0.9245);">Hardware reserved memory:</div>
<div class="a" style="left:435.80px;top:525px;font-size:8.400px;color:#1a1a1a;transform:scaleX(0.8791);">35.2 MB</div>
<svg class="a" style="left:5px;top:560px" width="15" height="15" viewBox="0 0 15 15"><circle cx="7.4" cy="7.4" r="6.3" fill="none" stroke="#a8a8a8" stroke-width="0.9"/><path d="M4.4 8.5 L7.3 5.5 L10.2 8.5" stroke="#8a8a8a" stroke-width="0.9" fill="none"/></svg>
<div class="a" style="left:23.00px;top:564px;font-size:8.100px;color:#1a1a1a;transform:scaleX(0.9342);">Fewer <u>d</u>etails</div>
<div class="a" style="left:73px;top:562px;width:1px;height:10px;background:#d0d0d0;"></div>
<svg class="a" style="left:78px;top:560px" width="13" height="13" viewBox="0 0 13 13"><circle cx="6.3" cy="6.5" r="4.9" fill="#f4f6f4" stroke="#9c9c9c" stroke-width="1.1"/><path d="M4.2 4 L6.6 8.4" stroke="#d81c24" stroke-width="1.6" stroke-linecap="round"/><path d="M9.4 4.6 L8.2 8" stroke="#f0a070" stroke-width="0.8"/></svg>
<div class="a" style="left:93.30px;top:563px;font-size:8.400px;color:#1e6fd0;transform:scaleX(0.9218);">Open Resource Monitor</div>
</body></html>
